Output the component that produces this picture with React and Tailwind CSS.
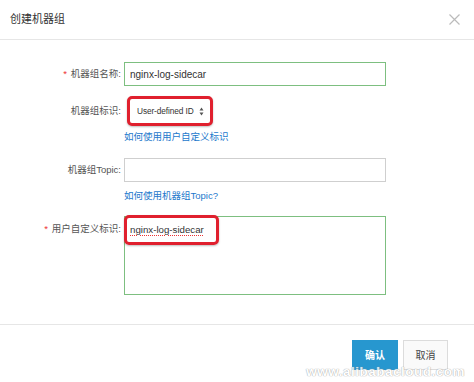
export default function App() {
  const cjk = { fontFamily: '"Liberation Sans", "Noto Sans CJK SC", sans-serif' };
  return (
    <div className="relative w-[474px] h-[382px] bg-white overflow-hidden text-[#555]" style={cjk}>
      {/* header */}
      <div className="h-[40px] flex items-center justify-between pl-[10px] pr-[14px] border-b border-[#e6e6e6]">
        <span className="text-[11px] text-[#333]">创建机器组</span>
        <svg width="11" height="11" viewBox="0 0 11 11" className="text-[#bbb]">
          <path d="M0.5 0.5L10.5 10.5M10.5 0.5L0.5 10.5" stroke="currentColor" strokeWidth="1.2" />
        </svg>
      </div>

      {/* body */}
      <div className="pt-[22px]">
        {/* row 1 */}
        <div className="flex items-center h-[24px]">
          <div className="w-[122px] flex justify-end items-center pr-[1px] text-[9.5px]">
            <span className="text-[#e33] mr-[4px]">*</span>
            <span>机器组名称:</span>
          </div>
          <div className="ml-[2px] w-[262px] h-[24px] border border-[#7dbf80] flex items-center pl-[5px] text-[10px] text-[#333]">
            nginx-log-sidecar
          </div>
        </div>

        {/* row 2 */}
        <div className="flex items-center mt-[10px] h-[30px]">
          <div className="w-[122px] text-right pr-[1px] text-[9.5px]">机器组标识:</div>
          <div className="ml-[5px] w-[86px] h-[30px] border-[3px] border-[#e0202e] rounded-[5px] bg-white flex items-center justify-between pl-[7px] pr-[6px] shadow-[0_1px_2px_rgba(0,0,0,0.25)]">
            <span className="text-[8.3px] text-[#333] tracking-[-0.1px]">User-defined ID</span>
            <svg width="5" height="9" viewBox="0 0 5 9" className="text-[#555]">
              <path d="M2.5 0.5L4.5 3.5H0.5Z M2.5 8.5L4.5 5.5H0.5Z" fill="currentColor" />
            </svg>
          </div>
        </div>
        <div className="ml-[124px] mt-[3px] h-[16px] flex items-center text-[9.5px] text-[#1c78cc]">如何使用用户自定义标识</div>

        {/* row 3 */}
        <div className="flex items-center mt-[13px] h-[24px]">
          <div className="w-[122px] text-right pr-[1px] text-[9.5px]">机器组Topic:</div>
          <div className="ml-[2px] w-[262px] h-[24px] border border-[#cfcfcf]"></div>
        </div>
        <div className="ml-[124px] mt-[6px] h-[16px] flex items-center text-[9.5px] text-[#1c78cc]">如何使用机器组Topic?</div>

        {/* row 4 */}
        <div className="flex items-start mt-[12px]">
          <div className="w-[122px] flex justify-end items-center pr-[1px] text-[9.5px] pt-[6px]">
            <span className="text-[#e33] mr-[4px]">*</span>
            <span>用户自定义标识:</span>
          </div>
          <div className="relative ml-[2px] w-[262px] h-[79px] border border-[#7dbf80]">
            <div className="absolute left-[-1px] top-[-2px] w-[95px] h-[30px] border-[3px] border-[#e0202e] rounded-[5px] shadow-[0_1px_2px_rgba(0,0,0,0.25)]"></div>
            <span className="absolute left-[5px] top-[6px] text-[9.7px] text-[#333] underline decoration-dotted decoration-[#e33] underline-offset-[2px]">nginx-log-sidecar</span>
          </div>
        </div>
      </div>

      {/* footer */}
      <div className="mt-[29px] border-t border-[#e6e6e6] pt-[15px] flex justify-end pr-[26px] gap-[5px]">
        <div className="w-[46px] h-[30px] bg-[#2797cf] text-white text-[10px] font-bold flex items-center justify-center">确认</div>
        <div className="w-[45px] h-[30px] border border-[#dcdcdc] bg-[#fafafa] text-[#444] text-[10px] flex items-center justify-center">取消</div>
      </div>

      {/* watermark */}
      <div className="absolute right-[9px] top-[362px] text-[13.5px] font-bold text-white tracking-[0.5px] opacity-80" style={{ textShadow: '0 0 1px #999, 0 0 1px #999' }}>
        www.alibabacloud.com
      </div>
    </div>
  );
}
